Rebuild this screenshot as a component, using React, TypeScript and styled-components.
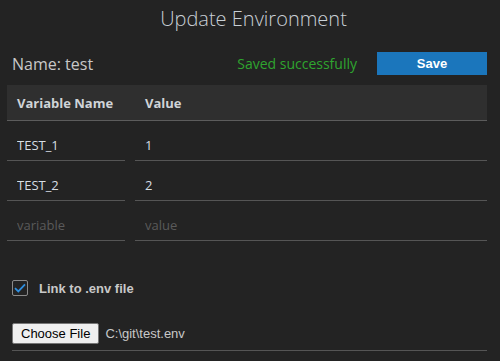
import { createGlobalStyle } from "styled-components";
import styled from "styled-components";

const GlobalStyle = createGlobalStyle`
  html, body {
    margin: 0;
    padding: 0;
    background: #232323;
  }
  body {
    font-family: "Open Sans", "Noto Sans", sans-serif;
    color: #cccccc;
  }
`;

type Variable = {
  name: string;
  value: string;
};

const VARIABLES: Variable[] = [
  { name: "TEST_1", value: "1" },
  { name: "TEST_2", value: "2" },
];

const App = (): JSX.Element => {
  return (
    <>
      <GlobalStyle />
      <Page>
        <Title>Update Environment</Title>
        <NameRow>
          <NameLabel>Name: test</NameLabel>
          <Status>Saved successfully</Status>
          <SaveButton>Save</SaveButton>
        </NameRow>
        <Table>
          <HeaderRow>
            <HeaderCell>Variable Name</HeaderCell>
            <HeaderCell>Value</HeaderCell>
          </HeaderRow>
          {VARIABLES.map((v) => (
            <Row key={v.name}>
              <NameInput defaultValue={v.name} />
              <ValueInput defaultValue={v.value} />
            </Row>
          ))}
          <Row>
            <NameInput placeholder="variable" />
            <ValueInput placeholder="value" />
          </Row>
        </Table>
        <CheckRow>
          <CheckBox>
            <svg width="12" height="10" viewBox="0 0 12 10">
              <path
                d="M1 5.2 L4.3 8.4 L11 1.4"
                fill="none"
                stroke="#2f8fe0"
                strokeWidth="1.8"
              />
            </svg>
          </CheckBox>
          <CheckLabel>Link to .env file</CheckLabel>
        </CheckRow>
        <FileRow>
          <FileButton>Choose File</FileButton>
          <FileName>C:\git\test.env</FileName>
        </FileRow>
      </Page>
    </>
  );
};

let Page = styled.div`
  display: flex;
  flex-direction: column;
  width: 480px;
  margin-left: 7px;
`;

let Title = styled.div`
  font-family: "Open Sans", sans-serif;
  font-weight: 300;
  font-size: 20px;
  color: #c9d0d6;
  text-align: center;
  height: 38px;
  line-height: 38px;
  padding-left: 13px;
`;

let NameRow = styled.div`
  display: flex;
  flex-direction: row;
  align-items: center;
  height: 23px;
  margin-top: 14px;
  padding-left: 5px;
`;

let NameLabel = styled.div`
  font-size: 16px;
  color: #c8c8c8;
  flex: 1;
`;

let Status = styled.div`
  font-size: 14px;
  color: #2fa52f;
  margin-right: 20px;
`;

let SaveButton = styled.button`
  width: 110px;
  height: 23px;
  border: none;
  background: #1b76bc;
  color: #ffffff;
  font-family: "Liberation Sans", Arial, sans-serif;
  font-weight: bold;
  font-size: 13px;
  padding: 0;
`;

let Table = styled.div`
  display: flex;
  flex-direction: column;
  margin-top: 10px;
`;

let HeaderRow = styled.div`
  display: grid;
  grid-template-columns: 128px 1fr;
  height: 36px;
  padding-top: 1px;
  box-sizing: border-box;
  background: #2f2f2f;
  border-bottom: 1px solid #5c5c5c;
  align-items: center;
`;

let HeaderCell = styled.div`
  font-size: 13px;
  font-weight: 700;
  color: #d0d4d8;
  padding-left: 10px;
`;

let Row = styled.div`
  display: grid;
  grid-template-columns: 118px 1fr;
  column-gap: 10px;
`;

let Field = styled.input`
  height: 30px;
  box-sizing: content-box;
  border: none;
  border-bottom: 1px solid #555555;
  background: transparent;
  outline: none;
  color: #d6dde3;
  font-family: "Open Sans", sans-serif;
  font-size: 13px;
  padding: 9px 0 0 10px;
  min-width: 0;
  &::placeholder {
    color: #5a5a5a;
  }
`;

let NameInput = styled(Field)`
  width: 108px;
`;

let ValueInput = styled(Field)`
  width: auto;
`;

let CheckRow = styled.div`
  display: flex;
  flex-direction: row;
  align-items: center;
  gap: 11px;
  margin-top: 39px;
  padding-left: 5px;
`;

let CheckBox = styled.div`
  width: 14px;
  height: 14px;
  border: 1px solid #8a8a8a;
  border-radius: 2px;
  display: flex;
  align-items: center;
  justify-content: center;
`;

let CheckLabel = styled.div`
  font-family: "Liberation Sans", Arial, sans-serif;
  font-weight: bold;
  font-size: 13px;
  color: #c8c8c8;
`;

let FileRow = styled.div`
  display: flex;
  flex-direction: row;
  align-items: center;
  gap: 6px;
  margin-top: 27px;
  margin-left: 5px;
  padding-bottom: 6px;
  border-bottom: 1px solid #555555;
`;

let FileButton = styled.button`
  height: 21px;
  padding: 0 8px;
  background: #efefef;
  border: 1px solid #767676;
  border-radius: 2px;
  color: #000000;
  font-family: "Liberation Sans", Arial, sans-serif;
  font-size: 13px;
`;

let FileName = styled.div`
  font-family: "Liberation Sans", Arial, sans-serif;
  font-size: 13px;
  color: #c8c8c8;
`;

export default App;
